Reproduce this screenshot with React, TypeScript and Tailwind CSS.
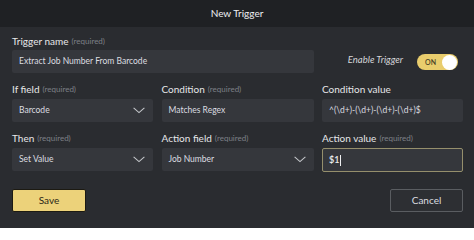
import React from "react";

const font = { fontFamily: '"Lato", "Helvetica Neue", Arial, sans-serif' };

function Label({ name, req = true }: { name: string; req?: boolean }) {
  return (
    <div className="h-[16px] flex items-center text-[10px] text-[#e6e7e9] whitespace-nowrap">
      {name}
      {req && <span className="ml-[3px] text-[8px] text-[#7d8087]">(required)</span>}
    </div>
  );
}

function Chevron() {
  return (
    <svg width="12" height="7" viewBox="0 0 12 7" className="shrink-0">
      <path d="M0.6 0.8 L6 5.6 L11.4 0.8" fill="none" stroke="#c3c5c9" strokeWidth="1.1" />
    </svg>
  );
}

function Select({ value }: { value: string }) {
  return (
    <div className="h-[23px] rounded-[2px] bg-[#35373c] flex items-center justify-between pl-[7px] pr-[8px] text-[8.5px] text-[#dcdde0]">
      <span>{value}</span>
      <Chevron />
    </div>
  );
}

function Input({ value }: { value: string }) {
  return (
    <div className="h-[23px] rounded-[2px] bg-[#35373c] flex items-center pl-[7px] text-[8.5px] text-[#dcdde0] whitespace-nowrap">
      {value}
    </div>
  );
}

export default function App() {
  return (
    <div className="w-[474px] h-[228px] bg-[#2a2c30] flex flex-col" style={font}>
      <div className="h-[27px] bg-[#1f2124] flex items-center justify-center text-[10px] text-[#eeeff1]">
        New Trigger
      </div>
      <div className="px-[12px] pt-[6px] grid grid-cols-[141px_152px_141px] gap-x-[8.5px]">
        <div className="col-span-2 flex flex-col">
          <Label name="Trigger name" />
          <div className="h-[23px] mt-[1px] rounded-[2px] bg-[#35373c] flex items-center pl-[7px] text-[8.5px] text-[#dcdde0]">
            Extract Job Number From Barcode
          </div>
        </div>
        <div className="flex items-end justify-end pb-[3px] pr-[5px]">
          <span className="text-[9.5px] italic text-[#d6d7da] mr-[14px] mb-[3px]">Enable Trigger</span>
          <div className="w-[41px] h-[16px] rounded-full bg-[#e9cd6d] flex items-center justify-between pl-[8px] pr-[1px]">
            <span className="text-[7px] font-semibold text-[#4a4226]">ON</span>
            <div className="w-[15px] h-[15px] rounded-full bg-white" />
          </div>
        </div>

        <div className="mt-[8px]">
          <Label name="If field" />
          <div className="mt-[2px]"><Select value="Barcode" /></div>
        </div>
        <div className="mt-[8px]">
          <Label name="Condition" />
          <div className="mt-[2px]"><Input value="Matches Regex" /></div>
        </div>
        <div className="mt-[8px]">
          <Label name="Condition value" req={false} />
          <div className="mt-[2px]"><Input value="^(\d+)-(\d+)-(\d+)-(\d+)$" /></div>
        </div>

        <div className="mt-[8px]">
          <Label name="Then" />
          <div className="mt-[2px]"><Select value="Set Value" /></div>
        </div>
        <div className="mt-[8px]">
          <Label name="Action field" />
          <div className="mt-[2px]"><Select value="Job Number" /></div>
        </div>
        <div className="mt-[8px]">
          <Label name="Action value" />
          <div className="mt-[2px] h-[24px] rounded-[2px] bg-[#35373c] border border-[#958f6c] flex items-center pl-[6px] text-[9px] font-semibold text-[#eeeff1]">
            $1<span className="ml-[1px] w-[1px] h-[11px] bg-[#eeeff1]" />
          </div>
        </div>
      </div>
      <div className="px-[12px] mt-[17px] flex justify-between pr-[11px]">
        <button className="w-[74px] h-[23px] rounded-[2px] bg-[#ecd27a] border border-[#1c1a12] text-[10px] text-[#2b2818]">
          Save
        </button>
        <button className="w-[73px] h-[23px] rounded-[2px] bg-[#2d2f33] border border-[#5a5d61] text-[10px] text-[#dcdde0]">
          Cancel
        </button>
      </div>
    </div>
  );
}
